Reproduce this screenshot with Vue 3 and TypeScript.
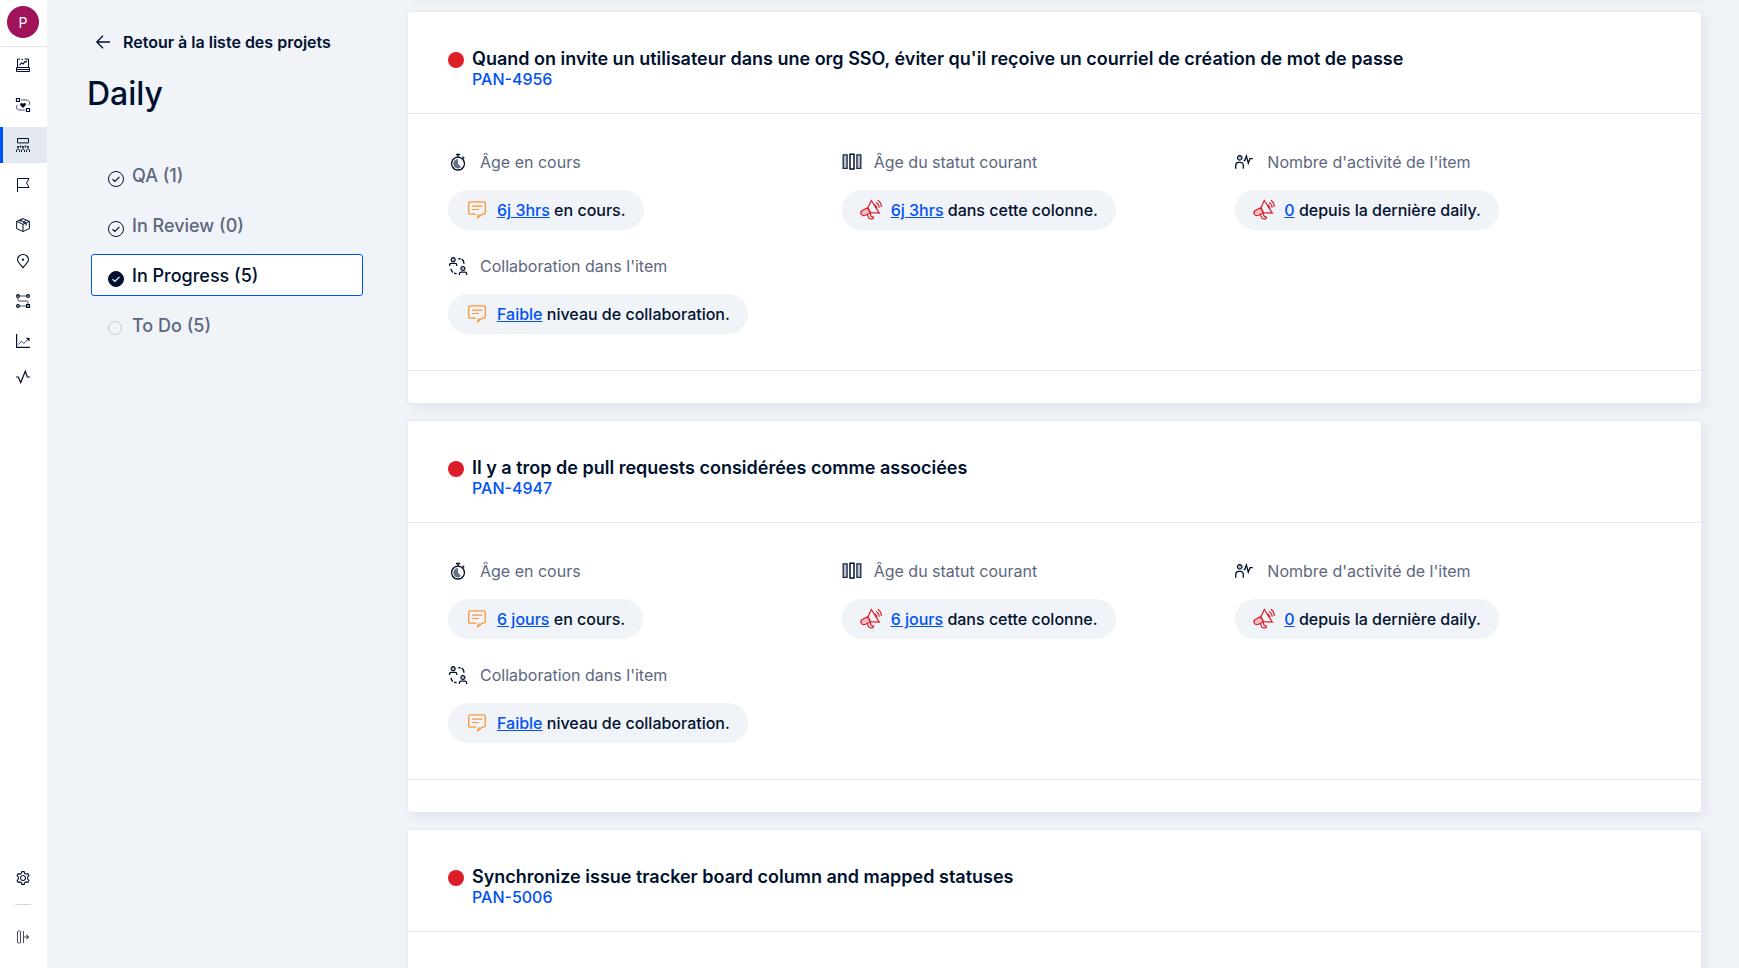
<script setup lang="ts">
import { computed, ref } from 'vue'

interface Part {
  d: string
  fill?: string
  opacity?: number
  width?: number
}

interface Icon {
  box: number
  parts: Part[]
}

interface NavItem {
  icon: string
  label: string
}

interface Column {
  name: string
  count: number
  state: 'done' | 'current' | 'todo'
}

interface Metric {
  icon: string
  label: string
  level: 'comment' | 'alert'
  value: string
  text: string
}

interface Item {
  key: string
  title: string
  metrics: Metric[]
}

const icons: Record<string, Icon> = {
  dashboard: {
    box: 14,
    parts: [
      { d: 'M1.500 9V1h2.500M5.500 1.500h1.500M8.500 1h4v8', width: 1 },
      { d: 'M.5 9.500h13v4H.5z M.5 11.500h13', width: 1 },
      { d: 'M3.500 7.200l2-2.200 1.500 1L9 3.600l.8.6L11 2.500', width: 1.1 },
    ],
  },
  goals: {
    box: 14,
    parts: [
      { d: 'M.5.5h3v3h-3z M10.500 10.500h3v3h-3z', width: 1.2 },
      { d: 'M5 1.900h5.200c2 0 3.300 1.200 3.300 3 0 1-.4 1.800-1.200 2.400', opacity: 0.7 },
      { d: 'M9 12H3.800C1.800 12 .5 10.800.5 9.100c0-1 .4-1.700 1.200-2.300', opacity: 0.7 },
      { d: 'M7 10L4.300 7.200c-.9-1.500.8-3 2.700-1.500 1.900-1.500 3.600 0 2.700 1.500z', fill: 'currentColor', width: 0 },
    ],
  },
  team: {
    box: 14,
    parts: [
      { d: 'M1.500.5h11v4.400h-11z' },
      { d: 'M.5 14v-1.800l1.500-1.600 1.500 1.600V14M5.500 14v-1.800L7 10.600l1.500 1.600V14M10.500 14v-1.800l1.500-1.600 1.500 1.600V14', width: 1 },
      { d: 'M2 8v2M7 8v2M12 8v2M4.500 7.600v1.800M9.500 7.600v1.800', width: 1.6 },
    ],
  },
  flag: { box: 14, parts: [{ d: 'M1.500 14V.5h11.500l-2.400 4.500L13 9.500H1.500' }] },
  box: {
    box: 14,
    parts: [
      { d: 'M7 .6l6.400 2.800v7.200L7 13.500.6 10.600V3.400z' },
      { d: 'M.6 3.400L7 6.300l6.400-2.900M7 6.300v7.200M3.700 2.100l6.400 2.800v2.600M6.600 1l-3 2.900M10 2L7 5', width: 1 },
    ],
  },
  pin: {
    box: 14,
    parts: [
      { d: 'M7 13.600C5.200 11.200 1.500 8.600 1.500 5.600a5.500 5.100 0 0 1 11 0c0 3-3.700 5.600-5.500 8z', width: 1.1 },
      { d: 'M7 4.800a.9.9 0 1 0 .01 0z', fill: 'currentColor', width: 0.4 },
    ],
  },
  flow: {
    box: 14,
    parts: [
      { d: 'M2 .6a1.400 1.400 0 1 0 .01 0zM12 .6a1.400 1.400 0 1 0 .01 0zM2 10.600a1.400 1.400 0 1 0 .01 0zM10.600 10.600h2.800v2.800h-2.800z', width: 1.3 },
      { d: 'M3.600 2h6.800M2 3.600v2.200c0 .8.4 1.200 1.200 1.200h7.600c.8 0 1.200.4 1.200 1.200v2.200M3.600 12h6.800', opacity: 0.75 },
    ],
  },
  chart: {
    box: 14,
    parts: [
      { d: 'M.6 0v13.400H14', width: 1.2 },
      { d: 'M2.500 10.500l3-3.300 2.300 2.300 4.800-4.700', opacity: 0.75 },
      { d: 'M10.200 4h3.100v3z', fill: 'currentColor', width: 0.4 },
    ],
  },
  pulse: { box: 14, parts: [{ d: 'M0 7h2.300L4.700 12.600 9.300 1.300 11.300 7H14', width: 1.2 }] },
  gear: {
    box: 14,
    parts: [
      { d: 'M5.900.6h2.200l.6 1.700 1.300.8 1.800-.4 1.100 1.800-1.200 1.400v2.200l1.200 1.400-1.100 1.800-1.800-.4-1.300.8-.6 1.700H5.900l-.6-1.700-1.300-.8-1.800.4-1.100-1.800 1.200-1.400V5.900L1.100 4.500l1.100-1.800 1.800.4 1.300-.8z', width: 1.1 },
      { d: 'M7 4.500a2.500 2.500 0 1 0 .01 0z', width: 1.1 },
    ],
  },
  expand: {
    box: 14,
    parts: [
      { d: 'M2.300 1h1.400q.8 0 .8.800v10.400q0 .8-.8.800H2.300q-.8 0-.8-.8V1.800q0-.8.8-.8zM7.500 1v12', width: 1 },
      { d: 'M8 7h4.500M10.300 4.800L12.600 7l-2.300 2.200', width: 1.1 },
    ],
  },
  back: { box: 14, parts: [{ d: 'M14 7H.8M7 .8L.8 7 7 13.200', width: 1.3 }] },
  stopwatch: {
    box: 18,
    parts: [
      { d: 'M9 4.200a6.400 6.400 0 1 0 .01 0z', width: 1.3 },
      { d: 'M9 6v4.800l3.200 3.300A4.700 4.700 0 1 1 9 6z', fill: 'currentColor', opacity: 0.6, width: 0 },
      { d: 'M7 1.500h4M9 1.500v2.600M13.600 3.600l1.600 1.600M13.900 5.600l1-1', width: 1.3 },
    ],
  },
  columns: {
    box: 20,
    parts: [
      { d: 'M1.200 2.800h3.900v13.600H1.200zM14.900 2.800h3.900v13.600h-3.900z', fill: '#b7bdca', opacity: 0.9, width: 1.3 },
      { d: 'M8 2.200h4v14.800H8z', width: 1.5 },
    ],
  },
  activity: {
    box: 18,
    parts: [
      { d: 'M4.700 2.600a2.300 2.300 0 1 0 .01 0z', fill: '#b7bdca', width: 1.2 },
      { d: 'M.7 15.800v-3.300c0-2 1.200-3.200 3-3.200h1.600c1.800 0 3 1.200 3 3.200v3.300', width: 1.3 },
      { d: 'M8.600 7.500h1.200l1.600-4.600 1.900 7.200 1.800-4.500h2.700', width: 1.3 },
    ],
  },
  collaboration: {
    box: 18,
    parts: [
      { d: 'M4.200.7a2 2 0 1 0 .01 0zM13.900 9.500a2 2 0 1 0 .01 0z', fill: '#b7bdca', width: 1.2 },
      { d: 'M.6 9V7.900q0-1.600 1.600-1.600h4q1.600 0 1.600 1.600V9M10.400 17.900v-1.100q0-1.600 1.600-1.600h4q1.600 0 1.600 1.600v1.100', width: 1.3 },
      { d: 'M9.300 1.700h2.200M12.600 2.200q2 .8 2.400 4.600M2 11.800q.3 2.400 1.800 3.600M5 16.200l2.700.4', width: 1.4 },
    ],
  },
  comment: {
    box: 18,
    parts: [
      { d: 'M2.200.8h13.600q1.500 0 1.500 1.500v9.400q0 1.500-1.500 1.500h-1.600L9.800 16.600l1-3.400M8 13.200H2.200q-1.500 0-1.500-1.500V2.300Q.7.8 2.200.8', width: 1.3 },
      { d: 'M4.200 5.200h10M4.200 8.500h6.600', width: 1.2 },
    ],
  },
  alert: {
    box: 22,
    parts: [
      { d: 'M11.300 1.500l8 12.600-8.700-.4-2.600-5z', width: 1.2 },
      { d: 'M7.400 8.800l3 5.200-5 2.300q-2.600 1-4-.8-1.500-2.400.8-4z', fill: '#f3bcc3', width: 1.2 },
      { d: 'M7.300 15.600l1.300 3.200q1.600 1.800 4.400.8l.6-1.200-2.700-1.300-.5-3', width: 1.2 },
      { d: 'M14.200 5.800q2.400.8 2.600 3.900M15.900 3.500q3.300 1.600 3.200 5.300M17.800 1.300q3.600 2.300 3.500 6.700', width: 1.2 },
    ],
  },
}

const navGroups: NavItem[][] = [
  [{ icon: 'dashboard', label: 'Tableau de bord' }],
  [{ icon: 'goals', label: 'Objectifs' }],
  [{ icon: 'team', label: 'Équipe' }],
  [{ icon: 'flag', label: 'Jalons' }],
  [{ icon: 'box', label: 'Livraisons' }, { icon: 'pin', label: 'Repères' }],
  [{ icon: 'flow', label: 'Flux' }],
  [{ icon: 'chart', label: 'Tendances' }, { icon: 'pulse', label: 'Activité' }],
]
const activeNav = ref('team')

const columns: Column[] = [
  { name: 'QA', count: 1, state: 'done' },
  { name: 'In Review', count: 0, state: 'done' },
  { name: 'In Progress', count: 5, state: 'current' },
  { name: 'To Do', count: 5, state: 'todo' },
]

const makeMetrics = (age: string): Metric[] => [
  { icon: 'stopwatch', label: 'Âge en cours', level: 'comment', value: age, text: 'en cours.' },
  { icon: 'columns', label: 'Âge du statut courant', level: 'alert', value: age, text: 'dans cette colonne.' },
  { icon: 'activity', label: "Nombre d'activité de l'item", level: 'alert', value: '0', text: 'depuis la dernière daily.' },
  { icon: 'collaboration', label: "Collaboration dans l'item", level: 'comment', value: 'Faible', text: 'niveau de collaboration.' },
]

const items = computed<Item[]>(() => [
  {
    key: 'PAN-4956',
    title: "Quand on invite un utilisateur dans une org SSO, éviter qu'il reçoive un courriel de création de mot de passe",
    metrics: makeMetrics('6j 3hrs'),
  },
  {
    key: 'PAN-4947',
    title: 'Il y a trop de pull requests considérées comme associées',
    metrics: makeMetrics('6 jours'),
  },
  {
    key: 'PAN-5006',
    title: 'Synchronize issue tracker board column and mapped statuses',
    metrics: [],
  },
])
</script>

<template>
  <div class="app">
    <nav class="rail" aria-label="Navigation principale">
      <div class="account">
        <button class="avatar" type="button" aria-label="Compte">P</button>
      </div>
      <div v-for="(group, g) in navGroups" :key="g" class="rail-group">
        <a
          v-for="entry in group"
          :key="entry.icon"
          href="#"
          class="rail-link"
          :class="{ active: entry.icon === activeNav }"
          :aria-label="entry.label"
          @click.prevent="activeNav = entry.icon"
        >
          <svg class="icon-nav" :viewBox="`0 0 ${icons[entry.icon].box} ${icons[entry.icon].box}`" aria-hidden="true">
            <path
              v-for="(part, p) in icons[entry.icon].parts"
              :key="p"
              :d="part.d"
              :fill="part.fill ?? 'none'"
              :stroke-width="part.width ?? 1"
              :opacity="part.opacity ?? 1"
            />
          </svg>
        </a>
      </div>
      <div class="rail-foot">
        <a href="#" class="rail-link" aria-label="Paramètres">
          <svg class="icon-nav" viewBox="0 0 14 14" aria-hidden="true">
            <path v-for="(part, p) in icons.gear.parts" :key="p" :d="part.d" fill="none" :stroke-width="part.width" />
          </svg>
        </a>
        <hr class="rail-rule" />
        <button class="rail-link expand" type="button" aria-label="Déplier le menu">
          <svg class="icon-nav" viewBox="0 0 14 14" aria-hidden="true">
            <path v-for="(part, p) in icons.expand.parts" :key="p" :d="part.d" fill="none" :stroke-width="part.width" />
          </svg>
        </button>
      </div>
    </nav>

    <aside class="side">
      <a href="#" class="back">
        <svg class="icon-nav" viewBox="0 0 14 14" aria-hidden="true">
          <path :d="icons.back.parts[0].d" fill="none" stroke-width="1.3" />
        </svg>
        Retour à la liste des projets
      </a>
      <h1>Daily</h1>
      <ul class="steps">
        <li v-for="column in columns" :key="column.name">
          <button class="step" type="button" :class="column.state">
            <svg class="status" viewBox="0 0 16 16" aria-hidden="true">
              <circle v-if="column.state === 'todo'" cx="7" cy="7" r="6.500" fill="none" stroke="#c6cad3" />
              <template v-else>
                <circle cx="8" cy="8" r="7.500" :fill="column.state === 'current' ? '#00112f' : 'none'" stroke="#00112f" />
                <path d="M4.500 8.300l2.300 2.200 4.700-4.700" fill="none" :stroke="column.state === 'current' ? '#fff' : '#00112f'" stroke-width="1.200" />
              </template>
            </svg>
            {{ column.name }} ({{ column.count }})
          </button>
        </li>
      </ul>
    </aside>

    <main class="feed">
      <div class="card-edge"></div>
      <article v-for="item in items" :key="item.key" class="card">
        <header class="card-head">
          <span class="dot"></span>
          <div>
            <h2>{{ item.title }}</h2>
            <a href="#" class="key">{{ item.key }}</a>
          </div>
        </header>
        <div class="metrics">
          <section v-for="metric in item.metrics" :key="metric.label" class="metric">
            <h3>
              <span class="metric-icon">
                <svg
                  :class="['glyph', metric.icon]"
                  :viewBox="`0 0 ${icons[metric.icon].box} ${icons[metric.icon].box}`"
                  aria-hidden="true"
                >
                  <path
                    v-for="(part, p) in icons[metric.icon].parts"
                    :key="p"
                    :d="part.d"
                    :fill="part.fill ?? 'none'"
                    :stroke-width="part.width ?? 1"
                    :opacity="part.opacity ?? 1"
                  />
                </svg>
              </span>
              {{ metric.label }}
            </h3>
            <p class="pill">
              <span class="level">
                <svg
                  :class="['glyph', metric.level]"
                  :viewBox="`0 0 ${icons[metric.level].box} ${icons[metric.level].box}`"
                  aria-hidden="true"
                >
                  <path
                    v-for="(part, p) in icons[metric.level].parts"
                    :key="p"
                    :d="part.d"
                    :fill="part.fill ?? 'none'"
                    :stroke-width="part.width ?? 1"
                  />
                </svg>
              </span>
              <span><a href="#">{{ metric.value }}</a> {{ metric.text }}</span>
            </p>
          </section>
        </div>
        <footer class="card-foot"></footer>
      </article>
    </main>
  </div>
</template>

<style>
body {
  margin: 0;
  background: #f0f3f8;
}
</style>

<style scoped>
.app {
  display: flex;
  height: 100vh;
  overflow: hidden;
  color: #00112f;
  background: #f0f3f8;
  font-family: Inter, 'Liberation Sans', sans-serif;
  font-size: 16px;
}

h1,
h2,
h3,
p,
ul {
  margin: 0;
  padding: 0;
}

button {
  border: 0;
  padding: 0;
  background: none;
  font: inherit;
  color: inherit;
  cursor: pointer;
}

a {
  color: #0052f5;
}

svg {
  display: block;
  overflow: visible;
  stroke: currentColor;
}

.rail {
  display: flex;
  flex-direction: column;
  flex: none;
  width: 47px;
  background: #fff;
}

.account {
  display: flex;
  justify-content: center;
  padding: 6px 1px 8px 0;
  border-bottom: 1px solid #e4e6ea;
}

.avatar {
  width: 32px;
  height: 32px;
  border-radius: 50%;
  background: #a0125a;
  color: #fff;
  font-size: 14px;
}

.rail-group {
  margin-bottom: 4px;
}

.rail-link {
  display: flex;
  align-items: center;
  justify-content: center;
  box-sizing: border-box;
  width: 100%;
  height: 36px;
  padding-right: 1px;
  color: #00112f;
}

.rail-link.active {
  background: #e4e8f1;
  box-shadow: inset 3px 0 #0052f5;
}

.icon-nav {
  width: 14px;
  height: 14px;
}

.rail-foot {
  margin-top: auto;
  padding-bottom: 13px;
}

.rail-rule {
  width: 16px;
  height: 1px;
  margin: 8px auto 14px 15px;
  border: 0;
  background: #d5d7dc;
}

.expand {
  color: #454c5c;
}

.side {
  flex: none;
  box-sizing: border-box;
  width: 360px;
  padding: 30px 44px 0 40px;
}

.back {
  display: flex;
  align-items: center;
  gap: 13px;
  height: 24px;
  padding-left: 9px;
  color: #00112f;
  font-weight: 600;
  text-decoration: none;
}

h1 {
  margin-top: 20px;
  font-size: 32px;
  font-weight: 500;
  line-height: 40px;
}

.steps {
  display: flex;
  flex-direction: column;
  gap: 8px;
  margin: 40px 0 0 4px;
  list-style: none;
}

.step {
  display: flex;
  align-items: center;
  gap: 8px;
  box-sizing: border-box;
  width: 100%;
  height: 42px;
  padding: 0 16px;
  border: 1px solid transparent;
  border-radius: 3px;
  color: #5c677e;
  font-size: 18px;
  font-weight: 500;
}

.step.current {
  border-color: #0052f5;
  background: #fff;
  color: #00112f;
}

.status {
  width: 16px;
  height: 16px;
  margin-top: 8px;
}

.feed {
  flex: 1;
  min-width: 0;
  padding-right: 37px;
}

.card-edge {
  height: 8px;
  margin: -13px 0 16px;
  border-radius: 4px;
  box-shadow: 4px 4px 12px rgba(0, 17, 47, 0.06);
}

.card {
  margin-bottom: 16px;
  border: 1px solid #e4e8f1;
  border-radius: 4px;
  background: #fff;
  box-shadow: 4px 4px 12px rgba(0, 17, 47, 0.06);
}

.card-head {
  display: flex;
  gap: 8px;
  padding: 37px 40px 24px;
  border-bottom: 1px solid #e4e8f1;
}

.dot {
  flex: none;
  width: 16px;
  height: 16px;
  margin-top: 3px;
  border-radius: 50%;
  background: #dc1e28;
}

h2 {
  font-size: 18px;
  font-weight: 600;
  line-height: 20px;
}

.key {
  display: block;
  font-weight: 500;
  line-height: 20px;
  text-decoration: none;
}

.metrics {
  display: grid;
  grid-template-columns: repeat(3, 1fr);
  row-gap: 24px;
  padding: 36px 72px 36px 40px;
  border-bottom: 1px solid #e4e8f1;
}

h3 {
  display: flex;
  align-items: center;
  height: 24px;
  margin-bottom: 16px;
  color: #5c677e;
  font-size: 16px;
  font-weight: 400;
}

.metric-icon {
  flex: none;
  width: 32px;
  color: #00112f;
}

.glyph {
  width: 18px;
  height: 18px;
}

.stopwatch,
.collaboration {
  margin-left: 1px;
}

.glyph.columns {
  width: 20px;
  height: 20px;
}

.pill {
  display: inline-flex;
  align-items: center;
  height: 40px;
  padding: 0 18px;
  border-radius: 20px;
  background: #f0f3f8;
  font-weight: 500;
}

.level {
  display: flex;
  flex: none;
  width: 31px;
}

.comment {
  margin-left: 2px;
  color: #fa9537;
}

.glyph.alert {
  width: 22px;
  height: 22px;
  color: #dc1e28;
}

.card-foot {
  height: 32px;
}
</style>
